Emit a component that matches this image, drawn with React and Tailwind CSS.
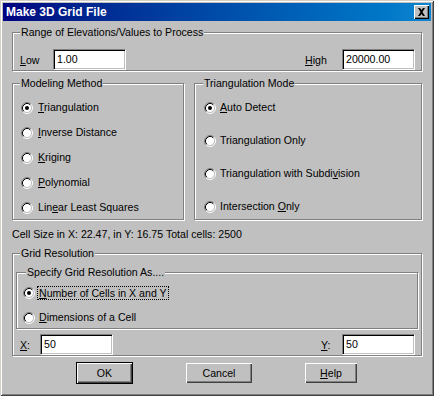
import React from "react";

const FONT = { fontFamily: '"Liberation Sans", Arial, sans-serif' };

function Radio({ checked }) {
  return (
    <svg width="12" height="12" viewBox="0 0 12 12" className="shrink-0">
      <circle cx="6" cy="6" r="4.5" fill="#fff" />
      <path d="M2.11 9.89 A5.5 5.5 0 0 1 9.89 2.11" stroke="#808080" fill="none" />
      <path d="M9.89 2.11 A5.5 5.5 0 0 1 2.11 9.89" stroke="#ffffff" fill="none" />
      <path d="M2.82 9.18 A4.5 4.5 0 0 1 9.18 2.82" stroke="#000000" fill="none" />
      <path d="M9.18 2.82 A4.5 4.5 0 0 1 2.82 9.18" stroke="#c0c0c0" fill="none" />
      {checked && <circle cx="6" cy="6" r="2" fill="#000" />}
    </svg>
  );
}

function Group({ label, className, children, labelLeft = "left-[7px]" }) {
  return (
    <div
      className={
        "relative border border-[#808080] shadow-[inset_1px_1px_0_#ffffff,1px_1px_0_#ffffff] " +
        className
      }
    >
      <div
        className={
          "absolute -top-[7px] px-[1px] bg-[#c0c0c0] leading-[13px] whitespace-nowrap " + labelLeft
        }
      >
        {label}
      </div>
      {children}
    </div>
  );
}

function Input({ value }) {
  return (
    <div className="w-[72px] h-[20px] bg-white border-t border-l border-[#808080] shadow-[1px_1px_0_#ffffff,inset_1px_1px_0_#000000,inset_-1px_-1px_0_#c0c0c0] pl-[3px] pt-[2px] leading-[14px]">
      {value}
    </div>
  );
}

function RadioRow({ checked, children, h, gap = "gap-[5px]" }) {
  return (
    <div className={"flex items-center " + gap + " " + h}>
      <Radio checked={checked} />
      <span className="leading-[13px] whitespace-nowrap">{children}</span>
    </div>
  );
}

function Button({ children, def, w }) {
  return (
    <div
      className={
        "flex items-center justify-center " +
        w +
        " " +
        (def
          ? "h-[22px] border border-black shadow-[inset_1px_1px_0_#ffffff,inset_-1px_-1px_0_#404040,inset_-2px_-2px_0_#808080]"
          : "h-[20px] shadow-[inset_1px_1px_0_#ffffff,inset_-1px_-1px_0_#404040,inset_-2px_-2px_0_#808080]")
      }
    >
      <span className="leading-[13px]">{children}</span>
    </div>
  );
}

export default function App() {
  return (
    <div
      style={FONT}
      className="w-[434px] h-[396px] bg-[#c0c0c0] text-[10.6px] text-black shadow-[inset_1px_1px_0_#d4d0c8,inset_-1px_-1px_0_#404040,inset_2px_2px_0_#ffffff,inset_-2px_-2px_0_#808080] p-[3px] flex flex-col overflow-hidden"
    >
      {/* Title bar */}
      <div className="h-[18px] flex items-center justify-between bg-gradient-to-r from-[#000080] to-[#1084d0] pl-[3px] pr-[2px]">
        <span className="text-white font-bold text-[12px] leading-[14px]">Make 3D Grid File</span>
        <div className="w-[15px] h-[14px] bg-[#c0c0c0] flex items-center justify-center shadow-[inset_1px_1px_0_#ffffff,inset_-1px_-1px_0_#000000,inset_-2px_-2px_0_#808080]">
          <svg width="9" height="8" viewBox="0 0 9 8">
            <path d="M1 0h2l1.5 2 1.5-2h2L5.5 4 8 8H6L4.5 6 3 8H1l2.5-4z" fill="#000" />
          </svg>
        </div>
      </div>

      {/* Body */}
      <div className="flex flex-col px-[9px] pt-[11px]">
        <Group label="Range of Elevations/Values to Process" className="h-[39px]">
          <div className="flex items-center justify-between pl-[7px] pr-[7px] pt-[16px]">
            <div className="flex items-center">
              <span className="w-[33px] leading-[13px] pt-[3px]">
                <u>L</u>ow
              </span>
              <Input value="1.00" />
            </div>
            <div className="flex items-center">
              <span className="w-[37px] leading-[13px] pt-[3px]">
                <u>H</u>igh
              </span>
              <Input value="20000.00" />
            </div>
          </div>
        </Group>

        <div className="flex mt-[12px] gap-[10px]">
          <Group label="Modeling Method" className="w-[172px] h-[137px]">
            <div className="flex flex-col pt-[11px] pl-[8px]">
              <RadioRow checked h="h-[25px]">
                <u>T</u>riangulation
              </RadioRow>
              <RadioRow h="h-[25px]">
                <u>I</u>nverse Distance
              </RadioRow>
              <RadioRow h="h-[25px]">
                <u>K</u>riging
              </RadioRow>
              <RadioRow h="h-[25px]">
                <u>P</u>olynomial
              </RadioRow>
              <RadioRow h="h-[25px]">
                Lin<u>e</u>ar Least Squares
              </RadioRow>
            </div>
          </Group>
          <Group label="Triangulation Mode" className="w-[228px] h-[137px]" labelLeft="left-[8px]">
            <div className="flex flex-col pt-[7px] pl-[9px]">
              <RadioRow checked h="h-[33px]" gap="gap-[4px]">
                <u>A</u>uto Detect
              </RadioRow>
              <RadioRow h="h-[33px]" gap="gap-[4px]">
                Triangulation Only
              </RadioRow>
              <RadioRow h="h-[33px]" gap="gap-[4px]">
                Triangulation with Subdi<u>v</u>ision
              </RadioRow>
              <RadioRow h="h-[33px]" gap="gap-[4px]">
                Intersection <u>O</u>nly
              </RadioRow>
            </div>
          </Group>
        </div>

        <div className="mt-[8px] leading-[13px]">
          Cell Size in X: 22.47, in Y: 16.75 Total cells: 2500
        </div>

        <Group label="Grid Resolution" className="mt-[12px] h-[103px]">
          <div className="flex flex-col px-[3px] pt-[18px]">
            <Group label="Specify Grid Resolution As...." className="h-[57px]" labelLeft="left-[9px]">
              <div className="flex flex-col pt-[7px] pl-[6px]">
                <div className="flex items-center gap-[3px] h-[25px]">
                  <Radio checked />
                  <span className="leading-[12px] outline outline-1 outline-dotted outline-black px-[1px]">
                    <u>N</u>umber of Cells in X and Y
                  </span>
                </div>
                <div className="flex items-center gap-[4px] h-[25px]">
                  <Radio />
                  <span className="leading-[13px]">
                    <u>D</u>imensions of a Cell
                  </span>
                </div>
              </div>
            </Group>
            <div className="flex items-center justify-between mt-[5px] pl-[4px] pr-[4px]">
              <div className="flex items-center">
                <span className="w-[20px] leading-[13px] pt-[3px]">
                  <u>X</u>:
                </span>
                <Input value="50" />
              </div>
              <div className="flex items-center">
                <span className="w-[21px] leading-[13px] pt-[3px]">
                  <u>Y</u>:
                </span>
                <Input value="50" />
              </div>
            </div>
          </div>
        </Group>

        <div className="flex items-center mt-[6px] h-[22px]">
          <div className="ml-[64px]">
            <Button def w="w-[57px]">OK</Button>
          </div>
          <div className="ml-[53px]">
            <Button w="w-[66px]">Cancel</Button>
          </div>
          <div className="ml-[53px]">
            <Button w="w-[52px]">
              <u>H</u>elp
            </Button>
          </div>
        </div>
      </div>
    </div>
  );
}
